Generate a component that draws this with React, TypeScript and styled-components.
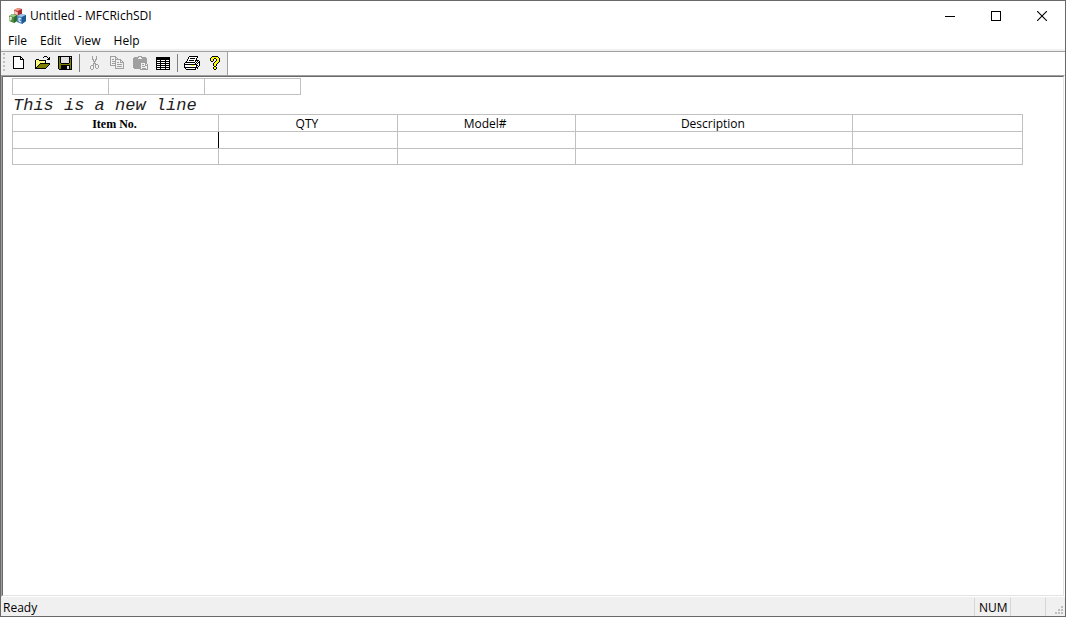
import React from "react";
import styled, { createGlobalStyle } from "styled-components";

const Global = createGlobalStyle`
  * { box-sizing: border-box; }
  body { margin: 0; background: #fff; }
`;

const UI_FONT = `"Open Sans", "Segoe UI", "Noto Sans", sans-serif`;

const Frame = styled.div`
  min-height: 100vh;
  display: flex;
  flex-direction: column;
  border: 1px solid #696969;
  background: #fff;
  color: #000;
  font: 12px/16px ${UI_FONT};
`;

const TitleBar = styled.header`
  display: flex;
  align-items: center;
  height: 29px;
  padding-left: 8px;
`;

const Title = styled.h1`
  flex: 1;
  margin: 0 0 0 4px;
  font: 12px/16px ${UI_FONT};
`;

const CaptionButton = styled.button`
  width: 46px;
  height: 28px;
  padding: 0;
  border: 0;
  background: none;
  display: grid;
  place-items: center;
`;

const MenuBar = styled.nav`
  display: flex;
  height: 21px;
  padding: 3px 0 0 1px;
  border-bottom: 2px solid #f0f0f0;
`;

const MenuButton = styled.button`
  padding: 0 7px 0 6px;
  border: 0;
  background: none;
  color: inherit;
  font: 12px/16px ${UI_FONT};
`;

const ToolBand = styled.div`
  display: flex;
  height: 24px;
  border-top: 1px solid #a0a0a0;
`;

const ToolBar = styled.div`
  display: flex;
  align-items: center;
  padding: 0 1px 1px 0;
  background: #f0f0f0;
  border-right: 1px solid #a0a0a0;
`;

const Grip = styled.span`
  width: 2px;
  height: 20px;
  margin: 0 2px;
  background: repeating-linear-gradient(#c0c0c0 0 2px, transparent 2px 4px);
`;

const ToolButton = styled.button`
  width: 23px;
  height: 22px;
  padding: 0;
  border: 0;
  background: none;
  display: grid;
  place-items: center;
`;

const ToolSeparator = styled.span`
  width: 1px;
  height: 18px;
  margin: 0 2px 0 3px;
  background: #808080;
`;

const Client = styled.main`
  flex: 1;
  border: 1px solid;
  border-color: #a0a0a0 #fff #fff #a0a0a0;
  display: flex;
`;

const Editor = styled.div`
  flex: 1;
  padding: 1px 40px 0 9px;
  border: 1px solid;
  border-color: #696969 #e3e3e3 #e3e3e3 #696969;
`;

const Grid = styled.table<{ $width: string }>`
  width: ${(p) => p.$width};
  table-layout: fixed;
  border-collapse: collapse;

  tr:last-child > td {
    height: 16px;
  }
`;

const cell = `
  position: relative;
  height: 17px;
  padding: 0 2px 0 0;
  border: 1px solid #c0c0c0;
  text-align: center;
`;

const HeadCell = styled.th<{ $serif?: boolean }>`
  ${cell}
  padding-top: 2px;
  font: ${(p) => (p.$serif ? `bold 12px/14px "Liberation Serif", serif` : `12px/14px ${UI_FONT}`)};
`;

const Cell = styled.td`
  ${cell}
`;

const Caret = styled.span`
  position: absolute;
  left: -1px;
  top: 0;
  width: 1px;
  height: 100%;
  background: #000;
`;

const Line = styled.p`
  margin: 0;
  padding: 2px 0 0 1px;
  color: #222;
  font: italic 17px/17px "Liberation Mono", monospace;
`;

const StatusBar = styled.footer`
  display: flex;
  height: 19px;
  padding: 1px 0 0 2px;
  background: #f0f0f0;
`;

const StatusText = styled.span`
  flex: 1;
  line-height: 19px;
`;

const Pane = styled.span<{ $width: number }>`
  width: ${(p) => p.$width}px;
  padding-left: 4px;
  border-left: 1px solid #d7d7d7;
  line-height: 19px;
`;

const GripPane = styled(Pane)`
  display: flex;
  align-items: flex-end;
  justify-content: flex-end;
  padding: 0 2px 2px 0;
`;

const INK: Record<string, string> = {
  "#": "#000000",
  w: "#ffffff",
  y: "#ffff00",
  o: "#808000",
  s: "#e0e0e0",
  g: "#a0a0a0",
  l: "#bfbfbf",
};

/* Draws a small bitmap glyph: one character per pixel, dots are clear. */
function Bitmap({ rows }: { rows: string[] }) {
  const width = Math.max(...rows.map((r) => r.length));
  const paths: Record<string, string> = {};
  rows.forEach((row, y) => {
    [...row].forEach((c, x) => {
      if (INK[c]) paths[c] = (paths[c] || "") + `M${x} ${y}h1v1h-1z`;
    });
  });
  return (
    <svg width={width} height={rows.length} shapeRendering="crispEdges" aria-hidden="true">
      {Object.entries(paths).map(([c, d]) => (
        <path key={c} d={d} fill={INK[c]} />
      ))}
    </svg>
  );
}

const newIcon = [
  ".########....",
  ".#wwwwww##...",
  ".#wwwwww#w#..",
  ".#wwwwww####.",
  ".#wwwwwwwww#.",
  ".#wwwwwwwww#.",
  ".#wwwwwwwww#.",
  ".#wwwwwwwww#.",
  ".#wwwwwwwww#.",
  ".#wwwwwwwww#.",
  ".#wwwwwwwww#.",
  ".#wwwwwwwww#.",
  ".###########.",
  ".............",
];

const openIcon = [
  "..........###...",
  ".........#...#.#",
  "..............##",
  "..###........###",
  ".#ywy#######....",
  ".#wywywywyw#....",
  ".#ywywywywy#....",
  ".#wywy##########",
  ".#ywy#ooooooooo#",
  ".#wy#ooooooooo#.",
  ".#y#ooooooooo#..",
  ".##ooooooooo#...",
  ".###########....",
  "................",
];

const saveIcon = [
  "##############",
  "#o#ssssssss#s#",
  "#o#ssssssss###",
  "#o#ssssssss#o#",
  "#o#ssssssss#o#",
  "#o#ssssssss#o#",
  "#o#ssssssss#o#",
  "#oo########oo#",
  "#oooooooooooo#",
  "#oo#########o#",
  "#oo######ss#o#",
  "#oo######ss#o#",
  "#oo######ss#o#",
  ".#############",
];

const cutIcon = [
  "....g...g..",
  "....g...g..",
  "....g...g..",
  "....gg.gg..",
  ".....g.g...",
  ".....ggg...",
  "......g....",
  ".....ggg...",
  ".....g.ggg.",
  "...ggg.g..g",
  "..g..g.g..g",
  "..g..g.g..g",
  "..g..g..gg.",
  "...gg......",
];

const copyIcon = [
  "..gggggg.........",
  "..g....gg........",
  "..g....g.g.......",
  "..g.gg.gggggg....",
  "..g....g....gg...",
  "..g.gggg....g.g..",
  "..g....g.gg.gggg.",
  "..g.gggg.......g.",
  "..g....g.ggggg.g.",
  "..gggggg.......g.",
  ".......g.ggggg.g.",
  ".......g.......g.",
  ".......ggggggggg.",
  ".................",
];

const pasteIcon = [
  "......gggg......",
  "..ggggg..ggggg..",
  ".ggggg....ggggg.",
  ".gggggggggggggg.",
  ".gggggggggggggg.",
  ".gggggggggggggg.",
  ".gggggggggggggg.",
  ".gggggggg....gg.",
  ".gggggggg.gg.g.g",
  ".gggggggg....ggg",
  ".gggggggg.ggg..g",
  ".gggggggg......g",
  "..ggggggg.gggg.g",
  "........gggggggg",
];

const tableIcon = [
  "##############",
  "##############",
  "##############",
  "#www#wwww#www#",
  "##############",
  "#www#wwww#www#",
  "##############",
  "#www#wwww#www#",
  "##############",
  "#www#wwww#www#",
  "##############",
  "#www#wwww#www#",
  "##############",
];

const printIcon = [
  ".....#########..",
  "....#wwwwwwww#..",
  "....#w#####w#...",
  "...#wwwwwwww#...",
  "...#w#####w####.",
  "..#wwwwwwww#w#w#",
  ".##########w#w##",
  "#wwwwwwwwww#w#w#",
  "#############ww#",
  "#wwwwwwyyyww##w#",
  "#wwwwwwwwwww#w#.",
  "##############..",
  ".#wwwwwwwww#w#..",
  "..##########....",
];

const helpIcon = [
  "..######..",
  ".#yyyyyy#.",
  "#yyy##yyy#",
  "#yy#..#yy#",
  "#yy#..#yy#",
  ".##..#yyy#",
  "....#yyy#.",
  "...#yyy#..",
  "...#yy#...",
  "...#yy#...",
  "....##....",
  "...#yy#...",
  "...#yy#...",
  "....##....",
];

const sizeGrip = [
  "......ll",
  "......ll",
  "........",
  "...ll.ll",
  "...ll.ll",
  "........",
  "ll.ll.ll",
  "ll.ll.ll",
];

function AppLogo() {
  return (
    <svg width="17" height="16" viewBox="0 0 17 16" aria-hidden="true">
      <path d="M5 2l4-2 4 1v6l-4 2-4-2z" fill="#c8453b" />
      <path d="M5 2l4-2 4 1-4 2z" fill="#ee9a8c" />
      <path d="M9 3l4-2v6l-4 2z" fill="#a92a2a" />
      <path d="M0 8l3-2 5 1v6l-3 2-5-2z" fill="#4c8a3b" />
      <path d="M0 8l3-2 5 1-3 2z" fill="#9dc989" />
      <path d="M5 9l3-2v6l-3 2z" fill="#2f6b2c" />
      <path d="M8 8l4-2 5 1v6l-4 3-5-2z" fill="#4485c0" />
      <path d="M8 8l4-2 5 1-4 2z" fill="#9cc8e8" />
      <path d="M13 9l4-2v6l-4 3z" fill="#245a94" />
      <path d="M6 3v3M8 4v3M6 5h2M1 13V9l2 1M1 11h2M12 11l-2-1v3l2 1" stroke="#fff" fill="none" />
    </svg>
  );
}

const tools = [
  { name: "New", rows: newIcon },
  { name: "Open", rows: openIcon },
  { name: "Save", rows: saveIcon },
  null,
  { name: "Cut", rows: cutIcon, disabled: true },
  { name: "Copy", rows: copyIcon, disabled: true },
  { name: "Paste", rows: pasteIcon, disabled: true },
  { name: "Insert table", rows: tableIcon },
  null,
  { name: "Print", rows: printIcon },
  { name: "About", rows: helpIcon },
];

const columns = [
  { label: "Item No.", width: "20.4%", serif: true },
  { label: "QTY", width: "17.7%" },
  { label: "Model#", width: "17.6%" },
  { label: "Description", width: "27.5%" },
  { label: "", width: "16.8%" },
];

export default function App() {
  return (
    <>
      <Global />
      <Frame>
        <TitleBar>
          <AppLogo />
          <Title>Untitled - MFCRichSDI</Title>
          <CaptionButton aria-label="Minimize">
            <svg width="10" height="10" shapeRendering="crispEdges">
              <path d="M0 5h10v1H0z" />
            </svg>
          </CaptionButton>
          <CaptionButton aria-label="Maximize">
            <svg width="10" height="10" shapeRendering="crispEdges">
              <path d="M.5.5h9v9h-9z" fill="none" stroke="#000" />
            </svg>
          </CaptionButton>
          <CaptionButton aria-label="Close">
            <svg width="10" height="10">
              <path d="M0 0l10 10M10 0L0 10" stroke="#000" strokeWidth="1.1" />
            </svg>
          </CaptionButton>
        </TitleBar>
        <MenuBar>
          {["File", "Edit", "View", "Help"].map((m) => (
            <MenuButton key={m}>{m}</MenuButton>
          ))}
        </MenuBar>
        <ToolBand>
          <ToolBar role="toolbar">
            <Grip />
            {tools.map((t, i) =>
              t ? (
                <ToolButton key={i} aria-label={t.name} disabled={t.disabled}>
                  <Bitmap rows={t.rows} />
                </ToolButton>
              ) : (
                <ToolSeparator key={i} />
              )
            )}
          </ToolBar>
        </ToolBand>
        <Client>
          <Editor>
            <Grid $width="289px">
              <tbody>
                <tr>
                  <Cell />
                  <Cell />
                  <Cell />
                </tr>
              </tbody>
            </Grid>
            <Line>This is a new line</Line>
            <Grid $width="100%">
              <colgroup>
                {columns.map((c, i) => (
                  <col key={i} style={{ width: c.width }} />
                ))}
              </colgroup>
              <thead>
                <tr>
                  {columns.map((c, i) => (
                    <HeadCell key={i} $serif={c.serif}>
                      {c.label}
                    </HeadCell>
                  ))}
                </tr>
              </thead>
              <tbody>
                {[0, 1].map((r) => (
                  <tr key={r}>
                    {columns.map((c, i) => (
                      <Cell key={i}>{r === 0 && i === 1 && <Caret />}</Cell>
                    ))}
                  </tr>
                ))}
              </tbody>
            </Grid>
          </Editor>
        </Client>
        <StatusBar>
          <StatusText>Ready</StatusText>
          <Pane $width={36}>NUM</Pane>
          <Pane $width={35} />
          <GripPane $width={20}>
            <Bitmap rows={sizeGrip} />
          </GripPane>
        </StatusBar>
      </Frame>
    </>
  );
}
